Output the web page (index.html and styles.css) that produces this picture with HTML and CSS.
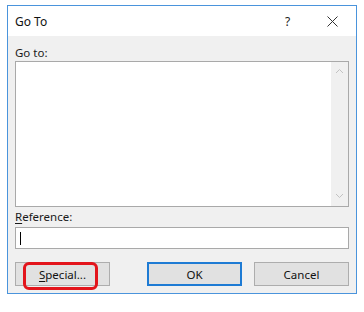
FILE: index.html
```html
<!DOCTYPE html>
<html>
<head>
<meta charset="utf-8">
<link rel="stylesheet" href="styles.css">
</head>
<body>
<div class="page">
  <div class="dialog">
    <div class="titlebar">
      <span class="title">Go To</span>
      <span class="help">?</span>
      <span class="close">
        <svg width="11" height="11" viewBox="0 0 11 11"><path d="M0.5 0.5L10.5 10.5M10.5 0.5L0.5 10.5" stroke="#333" stroke-width="1"/></svg>
      </span>
    </div>
    <div class="body">
      <div class="label first">Go to:</div>
      <div class="listbox">
        <div class="listarea"></div>
        <div class="scrollbar">
          <svg width="9" height="6" viewBox="0 0 9 6"><path d="M1 5L4.5 1.5L8 5" fill="none" stroke="#c2c2c2" stroke-width="1"/></svg>
          <svg width="9" height="6" viewBox="0 0 9 6"><path d="M1 1L4.5 4.5L8 1" fill="none" stroke="#c2c2c2" stroke-width="1"/></svg>
        </div>
      </div>
      <div class="label"><u>R</u>eference:</div>
      <div class="input"><span class="caret"></span></div>
      <div class="buttons">
        <div class="special-wrap">
          <button class="btn"><u>S</u>pecial...</button>
          <span class="highlight"></span>
        </div>
        <div class="right-group">
          <button class="btn default">OK</button>
          <button class="btn">Cancel</button>
        </div>
      </div>
    </div>
  </div>
</div>
</body>
</html>
```
FILE: styles.css
```css
html, body {
  margin: 0;
  padding: 0;
  background: #ffffff;
}
.page {
  padding: 5px 0 0 7px;
  font-family: "Noto Sans", "Open Sans", sans-serif;
  font-size: 11.5px;
  color: #1a1a1a;
}
.dialog {
  width: 348px;
  height: 287px;
  border: 1px solid #4a94dc;
  background: #f0f0f0;
  display: flex;
  flex-direction: column;
}
.titlebar {
  height: 30px;
  background: #ffffff;
  display: flex;
  align-items: center;
  padding-left: 7px;
}
.title {
  flex: 1;
  font-size: 12px;
  color: #111;
}
.help {
  width: 12px;
  font-size: 12px;
  color: #222;
  margin-right: 30px;
}
.close {
  display: flex;
  margin-right: 18px;
}
.body {
  flex: 1;
  padding: 0 7px 7px 7px;
  display: flex;
  flex-direction: column;
}
.label {
  height: 16px;
  line-height: 16px;
  margin-top: 2px;
  margin-bottom: 1px;
}
.label.first {
  margin-top: 9px;
  margin-bottom: 0;
}
.label u {
  text-decoration-thickness: 1px;
  text-underline-offset: 2px;
}
.listbox {
  height: 144px;
  border: 1px solid #a9a9a9;
  background: #ffffff;
  display: flex;
}
.listarea {
  flex: 1;
}
.scrollbar {
  width: 17px;
  background: #f0f0f0;
  display: flex;
  flex-direction: column;
  justify-content: space-between;
  align-items: center;
  padding: 6px 0 7px 0;
}
.input {
  height: 20px;
  border: 1px solid #a9a9a9;
  background: #ffffff;
  display: flex;
  align-items: center;
  padding-left: 4px;
  margin-top: 1px;
}
.caret {
  width: 1px;
  height: 13px;
  background: #000;
}
.buttons {
  margin-top: auto;
  display: flex;
  justify-content: space-between;
}
.right-group {
  display: flex;
  gap: 12px;
}
.special-wrap {
  position: relative;
}
.btn {
  width: 95px;
  height: 24px;
  border: 1px solid #adadad;
  background: #e1e1e1;
  font-family: "Noto Sans", "Open Sans", sans-serif;
  font-size: 11.5px;
  color: #111;
  padding: 0;
  margin: 0;
  box-sizing: border-box;
}
.btn u {
  text-underline-offset: 2px;
}
.btn.default {
  border: 2px solid #1e7bd4;
}
.highlight {
  position: absolute;
  left: 8px;
  top: 0;
  width: 69px;
  height: 22px;
  border: 3px solid #e3141b;
  border-radius: 6px;
  pointer-events: none;
}
```
